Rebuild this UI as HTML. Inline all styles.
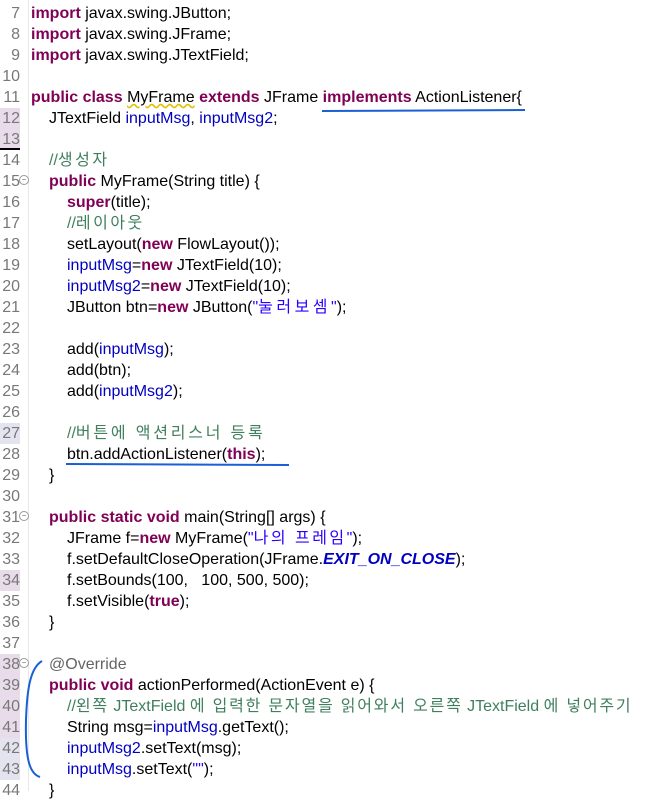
<!DOCTYPE html>
<html><head><meta charset="utf-8"><style>
body{margin:0;width:656px;height:791px;overflow:hidden;background:#fff;font-family:"Liberation Sans","Noto Sans CJK KR",sans-serif;font-size:16px;position:relative}
.g{position:absolute;left:0;top:0;width:28px;height:791px;background:#fff;border-right:1px solid #e8e8e8}
.n{position:absolute;left:0;width:20px;text-align:right;color:#787878;height:21px;line-height:21px}
.hl{background:#e8dcea}
.hl2{background:#e4e4f0}
.l{position:absolute;left:31px;height:21px;line-height:21px;white-space:pre;color:#000}
.l1{left:49px}.l2{left:67px}
.k{color:#7f0055;font-weight:bold}
.f{color:#0000c0}
.c{color:#3f7f5f}
.s{color:#2a00ff}
.a{color:#646464}
.i{color:#0000c0;font-weight:bold;font-style:italic}
.ko{letter-spacing:1.6px}
.fold{position:absolute;left:19px;width:8px;height:8px;border:1px solid #999;border-radius:50%;font-size:8px;line-height:8px;text-align:center;color:#666}
</style></head><body>
<div class="g"></div>
<div class="n" style="top:3px">7</div>
<div class="n" style="top:24px">8</div>
<div class="n" style="top:45px">9</div>
<div class="n" style="top:66px">10</div>
<div class="n" style="top:87px">11</div>
<div class="n hl" style="top:108px">12</div>
<div class="n hl" style="top:129px;border-bottom:2px solid #000;height:19px">13</div>
<div class="n" style="top:150px">14</div>
<div class="n" style="top:171px">15</div>
<div class="n" style="top:192px">16</div>
<div class="n" style="top:213px">17</div>
<div class="n" style="top:234px">18</div>
<div class="n" style="top:255px">19</div>
<div class="n" style="top:276px">20</div>
<div class="n" style="top:297px">21</div>
<div class="n" style="top:318px">22</div>
<div class="n" style="top:339px">23</div>
<div class="n" style="top:360px">24</div>
<div class="n" style="top:381px">25</div>
<div class="n" style="top:402px">26</div>
<div class="n hl2" style="top:423px">27</div>
<div class="n" style="top:444px">28</div>
<div class="n" style="top:465px">29</div>
<div class="n" style="top:486px">30</div>
<div class="n" style="top:507px">31</div>
<div class="n" style="top:528px">32</div>
<div class="n" style="top:549px">33</div>
<div class="n hl" style="top:570px">34</div>
<div class="n" style="top:591px">35</div>
<div class="n" style="top:612px">36</div>
<div class="n" style="top:633px">37</div>
<div class="n hl" style="top:654px">38</div>
<div class="n hl" style="top:675px">39</div>
<div class="n hl" style="top:696px">40</div>
<div class="n hl" style="top:717px">41</div>
<div class="n hl2" style="top:738px">42</div>
<div class="n hl2" style="top:759px">43</div>
<div class="n" style="top:780px">44</div>
<div class="fold" style="top:175px">−</div>
<div class="fold" style="top:511px">−</div>
<div class="fold" style="top:658px">−</div>

<div class="l" style="top:3px"><span class="k">import</span> javax.swing.JButton;</div>
<div class="l" style="top:24px"><span class="k">import</span> javax.swing.JFrame;</div>
<div class="l" style="top:45px"><span class="k">import</span> javax.swing.JTextField;</div>
<div class="l" style="top:87px"><span class="k">public</span> <span class="k">class</span> <span style="text-decoration:underline wavy #e0c000">MyFrame</span> <span class="k">extends</span> JFrame <span class="k">implements</span> ActionListener{</div>
<div class="l l1" style="top:108px">JTextField <span class="f">inputMsg</span>, <span class="f">inputMsg2</span>;</div>
<div class="l l1" style="top:150px"><span class="c">//<span class="ko" style="letter-spacing:2.5px">생성자</span></span></div>
<div class="l l1" style="top:171px"><span class="k">public</span> MyFrame(String title) {</div>
<div class="l l2" style="top:192px"><span class="k">super</span>(title);</div>
<div class="l l2" style="top:213px"><span class="c">//<span class="ko" style="letter-spacing:2.5px">레이아웃</span></span></div>
<div class="l l2" style="top:234px">setLayout(<span class="k">new</span> FlowLayout());</div>
<div class="l l2" style="top:255px"><span class="f">inputMsg</span>=<span class="k">new</span> JTextField(10);</div>
<div class="l l2" style="top:276px"><span class="f">inputMsg2</span>=<span class="k">new</span> JTextField(10);</div>
<div class="l l2" style="top:297px">JButton btn=<span class="k">new</span> JButton(<span class="s">"<span style="letter-spacing:3.5px">눌러보셈</span>"</span>);</div>
<div class="l l2" style="top:339px">add(<span class="f">inputMsg</span>);</div>
<div class="l l2" style="top:360px">add(btn);</div>
<div class="l l2" style="top:381px">add(<span class="f">inputMsg2</span>);</div>
<div class="l l2" style="top:423px"><span class="c">//<span class="ko" style="letter-spacing:2.8px">버튼에 액션리스너 등록</span></span></div>
<div class="l l2" style="top:444px">btn.addActionListener(<span class="k">this</span>);</div>
<div class="l l1" style="top:465px">}</div>
<div class="l l1" style="top:507px"><span class="k">public</span> <span class="k">static</span> <span class="k">void</span> main(String[] args) {</div>
<div class="l l2" style="top:528px">JFrame f=<span class="k">new</span> MyFrame(<span class="s">"<span class="ko" style="letter-spacing:2.5px">나의 프레임</span>"</span>);</div>
<div class="l l2" style="top:549px">f.setDefaultCloseOperation(JFrame.<span class="i">EXIT_ON_CLOSE</span>);</div>
<div class="l l2" style="top:570px">f.setBounds(100,   100, 500, 500);</div>
<div class="l l2" style="top:591px">f.setVisible(<span class="k">true</span>);</div>
<div class="l l1" style="top:612px">}</div>
<div class="l l1" style="top:654px"><span class="a">@Override</span></div>
<div class="l l1" style="top:675px"><span class="k">public</span> <span class="k">void</span> actionPerformed(ActionEvent e) {</div>
<div class="l l2" style="top:696px"><span class="c">//<span class="ko" style="letter-spacing:1.8px">왼쪽</span> JTextField <span class="ko" style="letter-spacing:1.8px">에 입력한 문자열을 읽어와서 오른쪽</span> JTextField <span class="ko" style="letter-spacing:1.8px">에 넣어주기</span></span></div>
<div class="l l2" style="top:717px">String msg=<span class="f">inputMsg</span>.getText();</div>
<div class="l l2" style="top:738px"><span class="f">inputMsg2</span>.setText(msg);</div>
<div class="l l2" style="top:759px"><span class="f">inputMsg</span>.setText(<span class="s">""</span>);</div>
<div class="l l1" style="top:780px">}</div>

<svg style="position:absolute;left:0;top:0" width="656" height="791">
<path d="M322 111 L525 110" stroke="#1a5fd6" stroke-width="2" fill="none"/>
<path d="M66 464 L289 465" stroke="#1a5fd6" stroke-width="2" fill="none"/>
<path d="M42 661 C30 668 27 690 26 720 C25 760 30 774 40 777" stroke="#1a5fd6" stroke-width="2" fill="none"/>
</svg>
</body></html>
